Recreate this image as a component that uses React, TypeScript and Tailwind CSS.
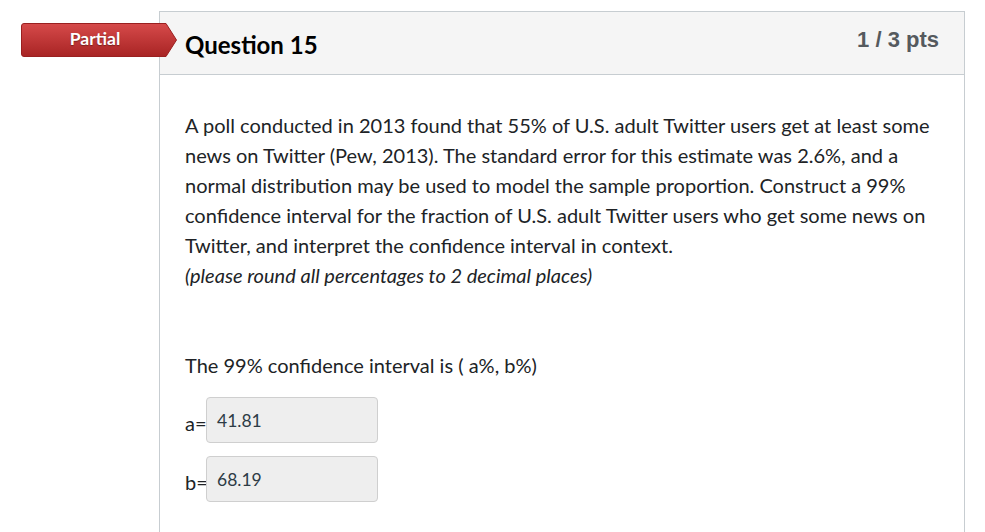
import React from 'react';

const Badge = () => (
  <div className="relative h-[34px] w-[156px]">
    <svg className="absolute inset-0" width="156" height="34" viewBox="0 0 156 34">
      <defs>
        <linearGradient id="rg" x1="0" y1="0" x2="0" y2="1">
          <stop offset="0" stopColor="#d64a4a" />
          <stop offset="1" stopColor="#a82424" />
        </linearGradient>
      </defs>
      <path d="M3 0.5 H145 L155.5 17 L145 33.5 H3 Q0.5 33.5 0.5 31 V3 Q0.5 0.5 3 0.5 Z" fill="url(#rg)" stroke="#9a2020" strokeWidth="1" />
    </svg>
    <span className="absolute left-0 w-[148px] top-[3px] text-center text-white font-bold text-[17.5px] [text-shadow:0_1px_1px_rgba(0,0,0,0.35)]">
      Partial
    </span>
  </div>
);

const AnswerRow = ({ label, value }: { label: string; value: string }) => (
  <div className="flex items-end">
    <span className="w-[21px] text-[20px] leading-[24px] mb-[8px]">{label}</span>
    <div className="w-[172px] h-[46px] bg-[#eeeeee] border border-[#cfcfcf] rounded-[4px] pl-[10px] pt-[8px] text-[17.5px] text-[#2d3b45]">
      {value}
    </div>
  </div>
);

export default function App() {
  return (
    <div className="bg-white w-[985px] h-[532px] overflow-hidden text-[#202326] font-['Lato','Noto_Sans',sans-serif]">
      <div className="flex pt-[11px]">
        <div className="w-[159px] shrink-0 pt-[12px] pl-[21px]">
          <Badge />
        </div>
        <div className="w-[806px] border border-[#c7cdd1] border-b-0">
          <div className="h-[63px] bg-[#f5f5f5] border-b border-[#c7cdd1] flex items-start justify-between pl-[25px] pr-[25px]">
            <h2 className="text-[24px] font-bold text-black mt-[15px]">Question 15</h2>
            <span className="text-[22px] font-bold text-[#555a5e] mt-[11px] font-['Liberation_Sans',sans-serif]">1 / 3 pts</span>
          </div>
          <div className="pl-[25px] pr-[30px] pt-[35px] text-[20px] leading-[30px] h-[600px]">
            <p>
              A poll conducted in 2013 found that 55% of U.S. adult Twitter users get at least some news on Twitter (Pew, 2013). The standard error for this estimate was 2.6%, and a normal distribution may be used to model the sample proportion. Construct a 99% confidence interval for the fraction of U.S. adult Twitter users who get some news on Twitter, and interpret the confidence interval in context.
            </p>
            <p className="italic">(please round all percentages to 2 decimal places)</p>
            <p className="mt-[60px]">The 99% confidence interval is ( a%, b%)</p>
            <div className="mt-[17px] flex flex-col gap-[13px]">
              <AnswerRow label="a=" value="41.81" />
              <AnswerRow label="b=" value="68.19" />
            </div>
          </div>
        </div>
      </div>
    </div>
  );
}
